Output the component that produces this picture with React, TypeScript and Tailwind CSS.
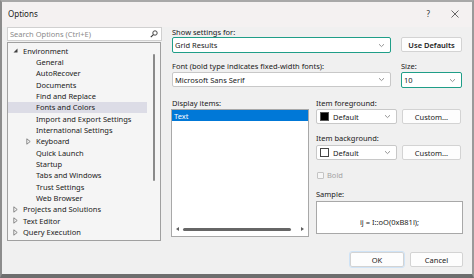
import React from "react";

const F = { fontFamily: '"Noto Sans", "Open Sans", Arial, sans-serif' };

function Chevron() {
  return (
    <svg width="7" height="5" viewBox="0 0 7 5" className="shrink-0">
      <path d="M1 1.2 L3.5 3.6 L6 1.2" fill="none" stroke="#8a8a8a" strokeWidth="0.9" />
    </svg>
  );
}

function Select({ children, teal, className }: { children: React.ReactNode; teal?: boolean; className?: string }) {
  return (
    <div
      className={
        "flex items-center justify-between bg-white rounded-[2px] pl-[2px] pr-[5px] " +
        (teal ? "border-[1.5px] border-[#1f9e88] " : "border border-[#c8c8c8] ") +
        (className || "")
      }
    >
      <div className="flex items-center gap-[4px]">{children}</div>
      <Chevron />
    </div>
  );
}

function Btn({ children, className }: { children: React.ReactNode; className?: string }) {
  return (
    <div
      className={
        "flex items-center justify-center bg-[#fdfdfd] border border-[#d3d3d3] rounded-[2px] text-[#1a1a1a] " +
        (className || "")
      }
    >
      {children}
    </div>
  );
}

type Item = { label: string; level: 0 | 1; arrow?: "open" | "closed"; selected?: boolean };

const items: Item[] = [
  { label: "Environment", level: 0, arrow: "open" },
  { label: "General", level: 1 },
  { label: "AutoRecover", level: 1 },
  { label: "Documents", level: 1 },
  { label: "Find and Replace", level: 1 },
  { label: "Fonts and Colors", level: 1, selected: true },
  { label: "Import and Export Settings", level: 1 },
  { label: "International Settings", level: 1 },
  { label: "Keyboard", level: 1, arrow: "closed" },
  { label: "Quick Launch", level: 1 },
  { label: "Startup", level: 1 },
  { label: "Tabs and Windows", level: 1 },
  { label: "Trust Settings", level: 1 },
  { label: "Web Browser", level: 1 },
  { label: "Projects and Solutions", level: 0, arrow: "closed" },
  { label: "Text Editor", level: 0, arrow: "closed" },
  { label: "Query Execution", level: 0, arrow: "closed" },
];

function Arrow({ kind }: { kind: "open" | "closed" }) {
  if (kind === "open")
    return (
      <svg width="5" height="5" viewBox="0 0 5 5">
        <path d="M4.5 0.5 L4.5 4.5 L0.5 4.5 Z" fill="#404040" />
      </svg>
    );
  return (
    <svg width="5" height="7" viewBox="0 0 5 7">
      <path d="M0.8 0.8 L4.2 3.5 L0.8 6.2 Z" fill="none" stroke="#707070" strokeWidth="0.8" />
    </svg>
  );
}

export default function App() {
  return (
    <div
      style={F}
      className="w-[474px] h-[278px] bg-[#f0f0f0] border-t-2 border-l-2 border-r-2 border-b-[4px] border-t-[#a8a8a8] border-l-[#8c8c8c] border-r-[#9a9a9a] border-b-[#6e6e6e] flex flex-col text-[7.5px] leading-[10px] text-[#1a1a1a] overflow-hidden"
    >
      {/* title bar */}
      <div className="h-[25px] shrink-0 flex items-center justify-between pl-[6px] pr-[13px] bg-[#f4f1f1]">
        <span className="text-[8px] pb-[2px]">Options</span>
        <div className="flex items-center gap-[21px] pb-[2px] text-[#333]">
          <span className="text-[8px]">?</span>
          <svg width="8" height="8" viewBox="0 0 8 8">
            <path d="M0.5 0.5 L7.5 7.5 M7.5 0.5 L0.5 7.5" stroke="#444" strokeWidth="0.8" />
          </svg>
        </div>
      </div>

      {/* body */}
      <div className="flex h-[215px] shrink-0">
        {/* left column */}
        <div className="ml-[5px] w-[155px] flex flex-col">
          <div className="h-[14px] bg-white border border-[#d0d0d0] flex items-center justify-between pl-[2px] pr-[3px]">
            <span className="text-[#8a8a8a]">Search Options (Ctrl+E)</span>
            <svg width="8" height="8" viewBox="0 0 8 8">
              <circle cx="5" cy="3" r="2.2" fill="none" stroke="#333" strokeWidth="0.9" />
              <path d="M3.4 4.6 L0.8 7.2" stroke="#333" strokeWidth="1.1" />
            </svg>
          </div>
          <div className="mt-[1px] h-[199px] w-[154px] bg-[#f5f5f5] border border-[#a0a0a0] relative overflow-hidden pt-[2px]">
            {items.map((it) => (
              <div
                key={it.label}
                className={
                  "h-[11.35px] flex items-center mr-[13px] " + (it.selected ? "bg-[#dcdce6]" : "")
                }
              >
                {it.level === 0 ? (
                  <>
                    <div className="w-[14px] flex justify-end pr-[4px]">{it.arrow && <Arrow kind={it.arrow} />}</div>
                    <span className="ml-[1px]">{it.label}</span>
                  </>
                ) : (
                  <>
                    <div className="w-[27px] flex justify-end pr-[4px]">{it.arrow && <Arrow kind={it.arrow} />}</div>
                    <span className="ml-[1px]">{it.label}</span>
                  </>
                )}
              </div>
            ))}
            <svg width="60" height="4" viewBox="0 0 60 4" className="block ml-[10px] mt-[1px]">
              <rect x="0" y="2" width="8" height="1.2" fill="#5a5a5a" />
              <rect x="11" y="2" width="14" height="1.2" fill="#5a5a5a" />
              <rect x="28" y="2" width="12" height="1.2" fill="#5a5a5a" />
            </svg>
            <div className="absolute left-[145px] top-[11px] w-[2px] h-[127px] bg-[#8a8a8a] rounded-full" />
          </div>
        </div>

        {/* right column */}
        <div className="ml-[9px] w-[292px] flex flex-col">
          <div className="flex">
            <div className="w-[220px] flex flex-col">
              <div className="h-[10px] pl-[1px]">Show settings for:</div>
              <Select teal className="h-[16px] ml-[1px]">
                <span>Grid Results</span>
              </Select>
              <div className="mt-[8px] h-[10px] pl-[1px]">Font (bold type indicates fixed-width fonts):</div>
              <Select className="h-[15px] ml-[1px] mt-[1px]">
                <span>Microsoft Sans Serif</span>
              </Select>
            </div>
            <div className="ml-[10px] w-[61px] flex flex-col">
              <div className="h-[10px]" />
              <Btn className="h-[15px] font-semibold">Use Defaults</Btn>
              <div className="mt-[9px] h-[10px]">Size:</div>
              <Select teal className="h-[16px] mt-[1px]">
                <span>10</span>
              </Select>
            </div>
          </div>

          <div className="flex mt-[10px]">
            <div className="w-[138px] flex flex-col">
              <div className="h-[11px] pl-[1px]">Display items:</div>
              <div className="h-[128px] bg-white border border-[#a8a8a8] flex flex-col justify-between">
                <div className="h-[11px] shrink-0 bg-[#0078d7] text-white flex items-center pl-[2px]">Text</div>
                <div className="h-[12px] shrink-0 flex items-center pl-[4px] pr-[4px] mb-[1px]">
                  <div className="w-0 h-0 border-y-[2.5px] border-y-transparent border-r-[3px] border-r-[#5e5e5e]" />
                  <div className="ml-[4px] w-[108px] h-[3px] rounded-full bg-[#666666]" />
                  <div className="grow" />
                  <div className="w-0 h-0 border-y-[2.5px] border-y-transparent border-l-[3px] border-l-[#5e5e5e]" />
                </div>
              </div>
            </div>
            <div className="ml-[7px] w-[147px] flex flex-col">
              <div className="h-[11px]">Item foreground:</div>
              <div className="flex">
                <Select className="w-[81px] h-[15px]">
                  <div className="w-[9px] h-[9px] bg-black border border-[#555] ml-[1px]" />
                  <span>Default</span>
                </Select>
                <Btn className="ml-[5px] w-[59px] h-[15px]">Custom...</Btn>
              </div>
              <div className="mt-[9px] h-[12px]">Item background:</div>
              <div className="flex">
                <Select className="w-[81px] h-[15px]">
                  <div className="w-[9px] h-[9px] bg-white border border-[#444] ml-[1px]" />
                  <span>Default</span>
                </Select>
                <Btn className="ml-[5px] w-[59px] h-[15px]">Custom...</Btn>
              </div>
              <div className="mt-[10px] flex items-center h-[10px] text-[#a3a3a3]">
                <div className="w-[7px] h-[7px] border border-[#c4c4c4] rounded-[1px] bg-[#f6f6f6] ml-[1px]" />
                <span className="ml-[3px]">Bold</span>
              </div>
              <div className="mt-[9px] h-[12px]">Sample:</div>
              <div className="h-[33px] bg-white border border-[#a8a8a8] flex items-center justify-center pt-[8px]">
                <span>ij = I::oO(0xB81l);</span>
              </div>
            </div>
          </div>
        </div>
      </div>

      {/* bottom buttons */}
      <div className="flex justify-end pr-[9px] mt-[10px]">
        <Btn className="w-[54px] h-[15px] border-[#5b9bd8] outline outline-1 outline-[#cfe3f6]">OK</Btn>
        <Btn className="ml-[6px] w-[53px] h-[15px]">Cancel</Btn>
      </div>
    </div>
  );
}
